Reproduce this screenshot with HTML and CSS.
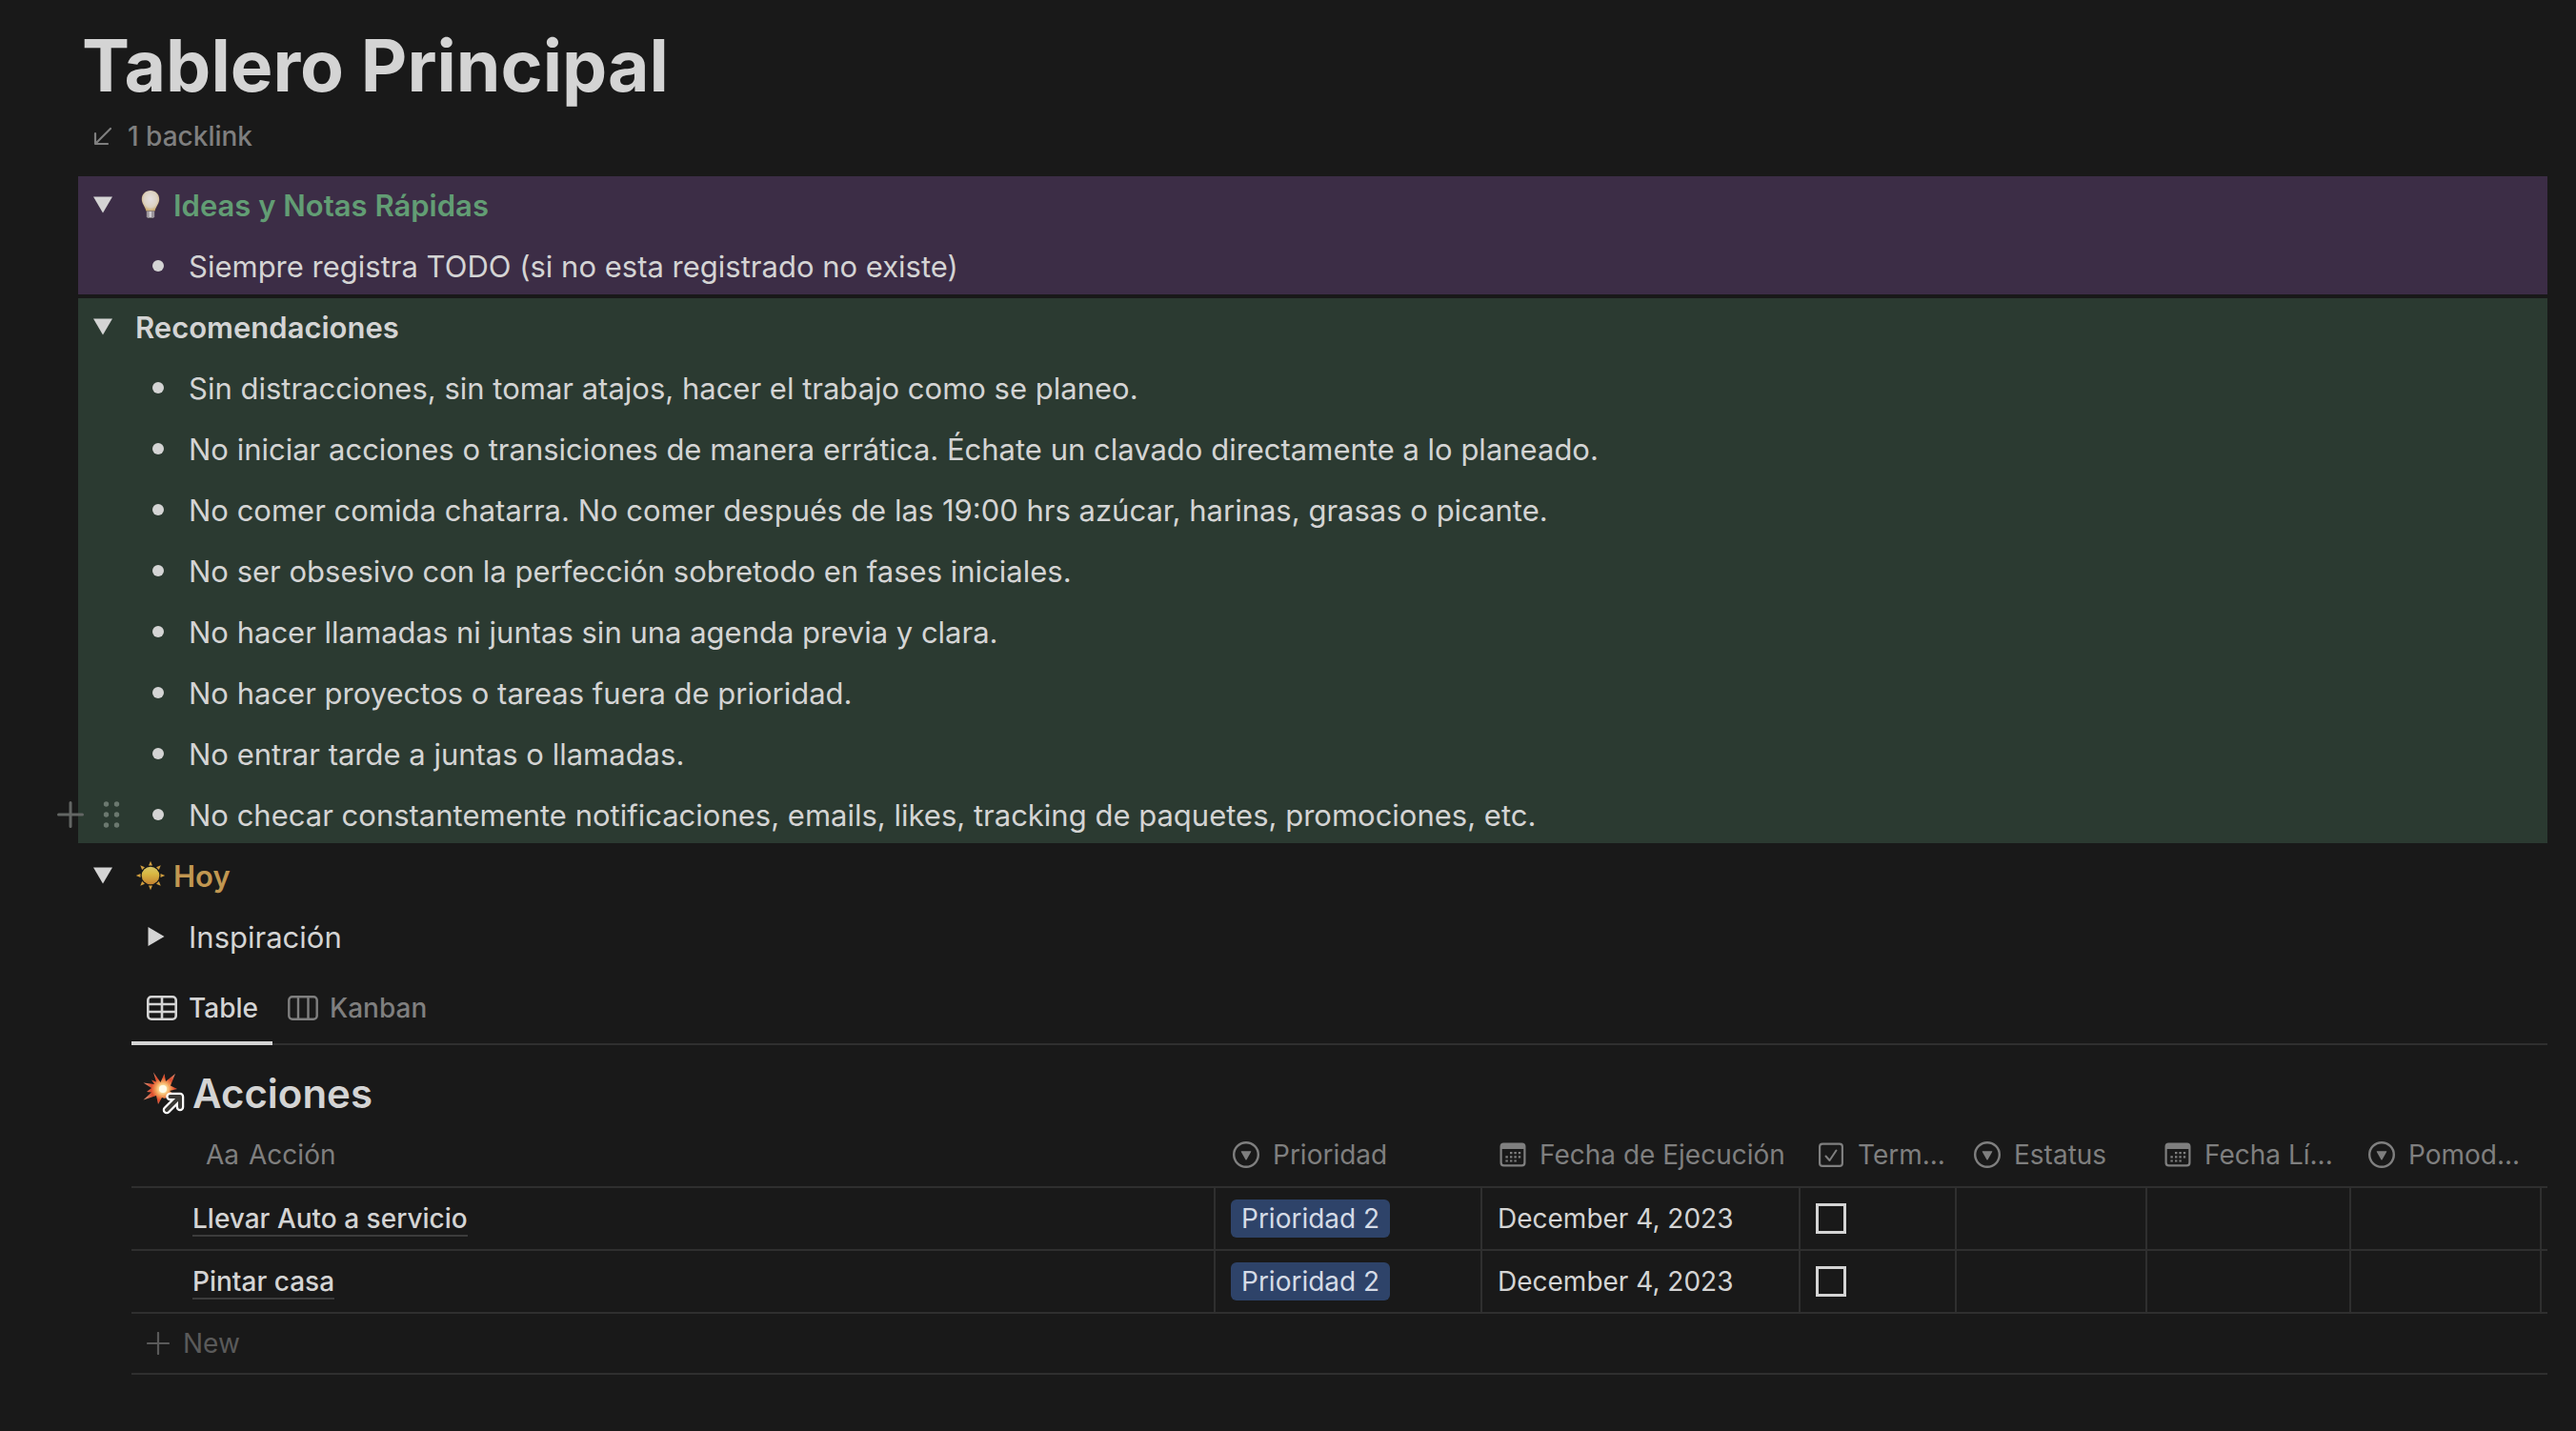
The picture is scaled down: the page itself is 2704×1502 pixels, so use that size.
FILE: index.html
```html
<!DOCTYPE html>
<html lang="es">
<head>
    <meta charset="UTF-8">
    <meta name="viewport" content="width=device-width, initial-scale=1.0">
    <title>Tablero Principal</title>
    <link rel="stylesheet" href="styles.css">
</head>
<body>
    <!-- Shared icons -->
    <svg class="sprite" aria-hidden="true">
        <symbol id="arrow" viewBox="0 0 20 18"><path d="M0 .5h20L10 17.500z"/></symbol>
        <symbol id="select" viewBox="0 0 28 28">
            <circle cx="14" cy="14" r="12.800" fill="none" stroke="currentColor" stroke-width="2.400"/>
            <path d="M9.200 10.200h9.600q.9 0 .4.9L14.700 19q-.7 1-1.400 0L8.800 11.100q-.5-.9.4-.9z" fill="currentColor"/>
        </symbol>
        <symbol id="calendar" viewBox="0 0 28 28">
            <path d="M4.500 1.500h19a4 4 0 0 1 4 4v17a4 4 0 0 1-4 4h-19a4 4 0 0 1-4-4v-17a4 4 0 0 1 4-4zM2.700 8v14.200a2 2 0 0 0 2 2h18.600a2 2 0 0 0 2-2V8z" fill="currentColor" fill-rule="evenodd"/>
            <path d="M11 11h2.400v2.200H11zM15.400 11h2.400v2.200h-2.400zM19.800 11h2.400v2.200h-2.400zM6.400 15.200h2.400v2.200H6.400zM11 15.200h2.400v2.200H11zM15.400 15.200h2.400v2.200h-2.400zM19.800 15.200h2.400v2.200h-2.400zM6.400 19.400h2.400v2.200H6.400zM11 19.400h2.400v2.200H11zM15.400 19.400h2.400v2.200h-2.400z" fill="currentColor"/>
        </symbol>
        <symbol id="check" viewBox="0 0 28 28">
            <rect x="2.100" y="2.600" width="23.800" height="23.300" rx="3" fill="none" stroke="currentColor" stroke-width="2.200"/>
            <path d="M8.500 15.500l4 4.500 7-10.500" fill="none" stroke="currentColor" stroke-width="2" stroke-linecap="round" stroke-linejoin="round"/>
        </symbol>
    </svg>

    <main class="page">
        <h1 class="page-title">Tablero Principal</h1>
        <a class="backlink" href="#">
            <svg width="20" height="20" viewBox="0 0 20 20" fill="none" stroke="currentColor" stroke-width="2.200" stroke-linecap="round" stroke-linejoin="round"><path d="M18 2L2.500 17.500M2 7v11h13"/></svg>
            1 backlink
        </a>

        <details class="block purple" open>
            <summary class="row">
                <svg class="marker" viewBox="0 0 20 18"><use href="#arrow"/></svg>
                <svg class="emoji" viewBox="0 0 32 32">
                    <defs>
                        <radialGradient id="glass" cx=".5" cy=".42" r=".6">
                            <stop offset="0" stop-color="#e4dfe0"/>
                            <stop offset=".65" stop-color="#dcd2c2"/>
                            <stop offset="1" stop-color="#c9a661"/>
                        </radialGradient>
                    </defs>
                    <path d="M16 1c5.600 0 9.200 4 9.200 9.300 0 4.500-3.300 7-4.600 12.200h-9.200C10.100 17.300 6.800 14.800 6.800 10.300 6.800 5 10.400 1 16 1z" fill="url(#glass)"/>
                    <path d="M11.800 22.500h8.400v6l-1.400 1.500h-5.600l-1.400-1.500z" fill="#9c969c"/>
                    <path d="M14.500 23h2.500v6h-2.500z" fill="#cfcbd0"/>
                    <path d="M13.500 29.700h5l-1.300 1.800h-2.400z" fill="#39323c"/>
                </svg>
                <span class="heading green-text">Ideas y Notas Rápidas</span>
            </summary>
            <ul class="bullets">
                <li class="row">Siempre registra TODO (si no esta registrado no existe)</li>
            </ul>
        </details>

        <details class="block green" open>
            <summary class="row">
                <svg class="marker" viewBox="0 0 20 18"><use href="#arrow"/></svg>
                <span class="heading">Recomendaciones</span>
            </summary>
            <ul class="bullets">
                <li class="row">Sin distracciones, sin tomar atajos, hacer el trabajo como se planeo.</li>
                <li class="row">No iniciar acciones o transiciones de manera errática. Échate un clavado directamente a lo planeado.</li>
                <li class="row">No comer comida chatarra. No comer después de las 19:00 hrs azúcar, harinas, grasas o picante.</li>
                <li class="row">No ser obsesivo con la perfección sobretodo en fases iniciales.</li>
                <li class="row">No hacer llamadas ni juntas sin una agenda previa y clara.</li>
                <li class="row">No hacer proyectos o tareas fuera de prioridad.</li>
                <li class="row">No entrar tarde a juntas o llamadas.</li>
                <li class="row">
                    <span class="handles">
                        <button class="handle" aria-label="Add block">
                            <svg width="28" height="28" viewBox="0 0 28 28" stroke="#636664" stroke-width="3" stroke-linecap="round"><path d="M14 1.500v25M1.500 14h25"/></svg>
                        </button>
                        <button class="handle" aria-label="Drag block">
                            <svg width="18" height="28" viewBox="0 0 18 28" fill="#6b786f">
                                <circle cx="3.500" cy="3" r="2.700"/><circle cx="14.500" cy="3" r="2.700"/>
                                <circle cx="3.500" cy="14" r="2.700"/><circle cx="14.500" cy="14" r="2.700"/>
                                <circle cx="3.500" cy="25" r="2.700"/><circle cx="14.500" cy="25" r="2.700"/>
                            </svg>
                        </button>
                    </span>
                    No checar constantemente notificaciones, emails, likes, tracking de paquetes, promociones, etc.
                </li>
            </ul>
        </details>

        <details class="block" open>
            <summary class="row">
                <svg class="marker" viewBox="0 0 20 18"><use href="#arrow"/></svg>
                <svg class="emoji" viewBox="0 0 32 32">
                    <defs>
                        <linearGradient id="sun" x1="0" y1="0" x2="0" y2="1">
                            <stop offset="0" stop-color="#d9c667"/>
                            <stop offset=".4" stop-color="#d9b843"/>
                            <stop offset="1" stop-color="#c5822f"/>
                        </linearGradient>
                    </defs>
                    <g fill="#cf9d3e">
                        <path id="ray" d="M16 .8l2 4.700h-4z"/>
                        <use href="#ray" transform="rotate(45 16 16)"/>
                        <use href="#ray" transform="rotate(90 16 16)"/>
                        <use href="#ray" transform="rotate(135 16 16)"/>
                        <use href="#ray" transform="rotate(180 16 16)"/>
                        <use href="#ray" transform="rotate(225 16 16)"/>
                        <use href="#ray" transform="rotate(270 16 16)"/>
                        <use href="#ray" transform="rotate(315 16 16)"/>
                    </g>
                    <circle cx="16" cy="16" r="9.300" fill="url(#sun)"/>
                </svg>
                <span class="heading yellow-text">Hoy</span>
            </summary>

            <div class="nested">
                <details>
                    <summary class="row">
                        <svg class="marker closed" viewBox="0 0 20 18"><use href="#arrow"/></svg>
                        <span>Inspiración</span>
                    </summary>
                </details>

                <section class="database">
                    <div class="tabs" role="tablist">
                        <button class="tab active" role="tab" aria-selected="true">
                            <svg width="32" height="26" viewBox="0 0 32 26" fill="none" stroke="currentColor" stroke-width="2.600"><rect x="1.300" y="1.300" width="29.400" height="23.400" rx="3.500"/><path d="M1 9h30M1 17h30M16 1.500v23"/></svg>
                            Table
                        </button>
                        <button class="tab" role="tab" aria-selected="false">
                            <svg width="32" height="26" viewBox="0 0 32 26" fill="none" stroke="currentColor" stroke-width="2.400"><rect x="1.300" y="1.300" width="29.400" height="23.400" rx="3.500"/><path d="M11 1.500v23M21.500 1.500v23"/></svg>
                            Kanban
                        </button>
                    </div>

                    <h2 class="db-title">
                        <svg width="44" height="46" viewBox="0 0 44 46">
                            <defs>
                                <radialGradient id="burst" gradientUnits="userSpaceOnUse" cx="21" cy="19" r="20">
                                    <stop offset="0" stop-color="#fff9dc"/>
                                    <stop offset=".16" stop-color="#fdeaa6"/>
                                    <stop offset=".36" stop-color="#f4a45c"/>
                                    <stop offset=".62" stop-color="#dc4a2c"/>
                                    <stop offset="1" stop-color="#d98a70"/>
                                </radialGradient>
                            </defs>
                            <path d="M11 1.500l7.500 10.500L22.500 3l1.500 8L34 3l-5 12.500 7 3.500-8 2 5 4-7 2-3 2-3-1-4 7-2-9L.5 30.500l8.500-8L4 22l5-4-8.500-5.500L12 14l-3-4.500 5 2z" fill="url(#burst)"/>
                            <circle cx="21" cy="19" r="4" fill="#fffbe8"/>
                            <g fill="none" stroke-linecap="round" stroke-linejoin="round">
                                <path d="M25 41L38 28M28.500 27h10.500v11" stroke="#fff" stroke-width="8.500"/>
                                <path d="M25 41L38 28M28.500 27h10.500v11" stroke="#3a3935" stroke-width="4"/>
                            </g>
                        </svg>
                        Acciones
                    </h2>

                    <table class="db-table">
                        <colgroup>
                            <col>
                            <col class="col-priority">
                            <col class="col-date">
                            <col class="col-done">
                            <col class="col-status">
                            <col class="col-limit">
                            <col class="col-pomodoro">
                            <col class="col-rest">
                        </colgroup>
                        <thead>
                            <tr>
                                <th class="name"><span class="prop"><span>Aa</span><span>Acción</span></span></th>
                                <th><span class="prop"><svg><use href="#select"/></svg><span>Prioridad</span></span></th>
                                <th><span class="prop"><svg><use href="#calendar"/></svg><span>Fecha de Ejecución</span></span></th>
                                <th><span class="prop"><svg><use href="#check"/></svg><span>Term...</span></span></th>
                                <th><span class="prop"><svg><use href="#select"/></svg><span>Estatus</span></span></th>
                                <th><span class="prop"><svg><use href="#calendar"/></svg><span>Fecha Lí...</span></span></th>
                                <th><span class="prop"><svg><use href="#select"/></svg><span>Pomod...</span></span></th>
                                <th></th>
                            </tr>
                        </thead>
                        <tbody>
                            <tr>
                                <td class="name"><a href="#">Llevar Auto a servicio</a></td>
                                <td><span class="tag">Prioridad 2</span></td>
                                <td>December 4, 2023</td>
                                <td><input type="checkbox" aria-label="Terminado: Llevar Auto a servicio"></td>
                                <td></td>
                                <td></td>
                                <td></td>
                                <td></td>
                            </tr>
                            <tr>
                                <td class="name"><a href="#">Pintar casa</a></td>
                                <td><span class="tag">Prioridad 2</span></td>
                                <td>December 4, 2023</td>
                                <td><input type="checkbox" aria-label="Terminado: Pintar casa"></td>
                                <td></td>
                                <td></td>
                                <td></td>
                                <td></td>
                            </tr>
                        </tbody>
                    </table>
                    <button class="new-row">
                        <svg width="24" height="24" viewBox="0 0 24 24" stroke="currentColor" stroke-width="2.200" stroke-linecap="round"><path d="M12 1v22M1 12h22"/></svg>
                        New
                    </button>
                </section>
            </div>
        </details>
    </main>
</body>
</html>
```

FILE: styles.css
```css
* {
    margin: 0;
    padding: 0;
    box-sizing: border-box;
}

body {
    font-family: Inter, "Noto Sans", sans-serif;
    font-size: 31px;
    background: #191919;
    color: #d4d4d4;
    min-height: 100vh;
}

button {
    font: inherit;
    color: inherit;
    background: none;
    border: none;
    cursor: pointer;
}

a {
    color: inherit;
    text-decoration: none;
}

.sprite {
    display: none;
}

.page {
    padding: 21px 30px 60px 82px;
}

.page-title {
    font-size: 75px;
    line-height: 96px;
    font-weight: 700;
    padding-left: 4px;
}

.backlink {
    display: flex;
    align-items: center;
    gap: 16px;
    width: fit-content;
    height: 52px;
    margin-bottom: 16px;
    padding-left: 16px;
    font-size: 28px;
    font-weight: 500;
    color: #7f7f7f;
}

/* Toggle blocks */
.block {
    margin-bottom: 4px;
}

.purple {
    background: #3c2d46;
}

.green {
    background: #2b3a31;
}

.row {
    display: flex;
    align-items: center;
    height: 60px;
    white-space: nowrap;
}

summary {
    list-style: none;
    cursor: pointer;
}

.marker {
    width: 20px;
    height: 18px;
    margin: 0 24px 0 16px;
    fill: currentColor;
    flex: none;
}

.marker.closed {
    transform: rotate(-90deg);
}

.emoji {
    width: 32px;
    height: 32px;
    margin-right: 8px;
}

.heading {
    font-weight: 600;
}

.green-text {
    color: #629d74;
}

.yellow-text {
    color: #c19751;
}

.bullets {
    list-style: none;
}

.bullets .row {
    position: relative;
    margin-top: 4px;
    padding-left: 78px;
}

.bullets .row::before {
    content: "";
    width: 12px;
    height: 12px;
    margin-right: 26px;
    border-radius: 50%;
    background: currentColor;
}

/* Hover controls float over the block's left edge */
.handles {
    position: absolute;
    left: -22px;
    display: flex;
    align-items: center;
    gap: 20px;
}

.handle svg {
    display: block;
}

.nested {
    padding-left: 56px;
    margin-top: 4px;
}

/* Database */
.tabs {
    display: flex;
    height: 74px;
    margin-top: 10px;
    border-bottom: 2px solid #2f2f2f;
}

.tab {
    display: flex;
    align-items: center;
    gap: 12px;
    height: 74px;
    padding: 0 15px 0 16px;
    border-bottom: 4px solid transparent;
    font-size: 28px;
    font-weight: 500;
    color: #7f7f7f;
}

.tab.active {
    color: #d4d4d4;
    border-bottom-color: #d4d4d4;
}

.db-title {
    display: flex;
    align-items: center;
    gap: 8px;
    height: 60px;
    margin: 20px 0 2px;
    padding-left: 12px;
    font-size: 42px;
    font-weight: 600;
}

.db-table {
    width: 100%;
    table-layout: fixed;
    border-collapse: separate;
    border-spacing: 0;
    font-size: 28px;
}

.col-priority {
    width: 280px;
}

.col-date {
    width: 334px;
}

.col-done {
    width: 164px;
}

.col-status,
.col-pomodoro {
    width: 200px;
}

.col-limit {
    width: 214px;
}

.col-rest {
    width: 6px;
}

.db-table th {
    height: 68px;
    padding-left: 18px;
    border-bottom: 2px solid #2f2f2f;
    font-weight: 400;
    text-align: left;
    white-space: nowrap;
    color: #7f7f7f;
}

.db-table th:last-child,
.db-table td:last-child {
    padding: 0;
    border-right: none;
}

.db-table th.name {
    padding-left: 78px;
}

.prop {
    display: flex;
    align-items: center;
    gap: 14px;
}

.name .prop {
    gap: 10px;
}

.prop svg {
    width: 28px;
    height: 28px;
    flex: none;
}

.db-table td {
    height: 66px;
    padding-left: 16px;
    border-right: 2px solid #2f2f2f;
    border-bottom: 2px solid #2f2f2f;
    white-space: nowrap;
}

.db-table td.name {
    padding-left: 64px;
    font-weight: 500;
}

.name a {
    border-bottom: 2px solid #3c3c3c;
}

.tag {
    display: inline-block;
    height: 40px;
    line-height: 40px;
    padding: 0 11px;
    border-radius: 6px;
    background: #2e4369;
    color: #d5dbe6;
    vertical-align: middle;
}

.db-table input {
    appearance: none;
    display: block;
    width: 32px;
    height: 32px;
    border: 3px solid #d4d4d4;
}

.new-row {
    display: flex;
    align-items: center;
    gap: 14px;
    width: 100%;
    height: 64px;
    padding-left: 16px;
    border-bottom: 2px solid #2f2f2f;
    font-size: 28px;
    color: #5a5a5a;
}
```
